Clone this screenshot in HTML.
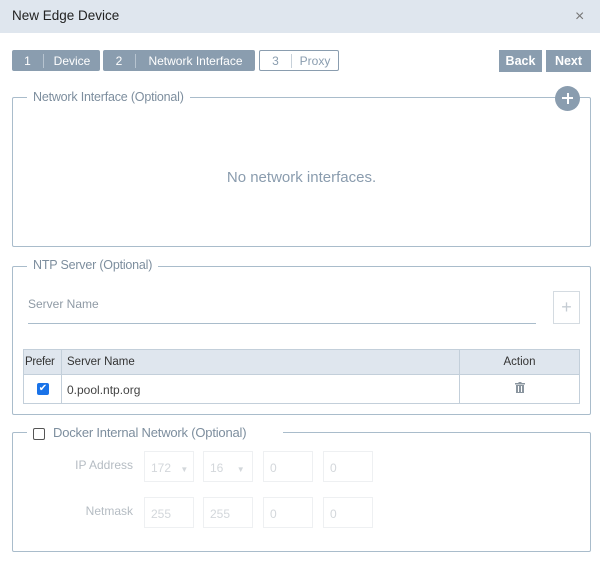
<!DOCTYPE html>
<html><head><meta charset="utf-8"><style>
*{box-sizing:border-box;margin:0;padding:0}
body{width:600px;height:563px;background:#fff;font-family:"Liberation Sans",sans-serif;position:relative;overflow:hidden;color:#333}
.a{position:absolute}
.hdr{left:0;top:0;width:600px;height:33px;background:#dfe6ee}
.step{height:21px;top:50px;background:#8a9daf;color:#fff;font-size:12px;border-radius:2px;display:flex;align-items:center}
.step span{display:block;text-align:center}
.fs{border:1px solid #a9bccb;border-radius:2px}
.lg{background:#fff;color:#7d8e9e;font-size:12.5px;padding:0 6px;letter-spacing:-0.2px}
.box{border:1px solid #eef0f2;height:31px;width:50px;font-size:12px;color:#d3d7db;padding:9px 0 0 6px}
.lbl{font-size:12px;color:#b5bcc3;text-align:right;width:90px}
</style></head><body>
<div class="a hdr"></div>
<div class="a" style="left:12px;top:8px;font-size:13.5px;color:#222">New Edge Device</div>
<div class="a" style="left:575px;top:8px;font-size:16px;color:#777">×</div>

<div class="a step" style="left:12px;width:88px"><span style="width:32px;border-right:1px solid #b7c4d0">1</span><span style="flex:1">Device</span></div>
<div class="a step" style="left:103px;width:152px"><span style="width:33px;border-right:1px solid #b7c4d0">2</span><span style="flex:1">Network Interface</span></div>
<div class="a step" style="left:259px;width:80px;background:#fff;border:1px solid #8a9daf;color:#8a9daf"><span style="width:32px;border-right:1px solid #c7d1da">3</span><span style="flex:1">Proxy</span></div>
<div class="a step" style="left:499px;width:43px;top:50px;height:22px;justify-content:center;font-weight:bold;font-size:12.5px;border-radius:0">Back</div>
<div class="a step" style="left:546px;width:45px;top:50px;height:22px;justify-content:center;font-weight:bold;font-size:12.5px;border-radius:0">Next</div>

<div class="a fs" style="left:12px;top:97px;width:579px;height:150px"></div>
<div class="a lg" style="left:27px;top:90px">Network Interface (Optional)</div>
<div class="a" style="left:555px;top:86px;width:25px;height:25px;border-radius:50%;background:#8a9daf"></div>
<div class="a" style="left:562px;top:97px;width:11px;height:2px;background:#fff"></div>
<div class="a" style="left:566.5px;top:92.5px;width:2px;height:11px;background:#fff"></div>
<div class="a" style="left:12px;top:169px;width:579px;text-align:center;font-size:15px;color:#8a9cae">No network interfaces.</div>

<div class="a fs" style="left:12px;top:266px;width:579px;height:149px"></div>
<div class="a lg" style="left:27px;top:258px">NTP Server (Optional)</div>
<div class="a" style="left:28px;top:297px;font-size:12px;color:#8f9aa5">Server Name</div>
<div class="a" style="left:28px;top:323px;width:508px;height:1px;background:#a9bccb"></div>
<div class="a" style="left:553px;top:291px;width:27px;height:33px;border:1px solid #d4dbe1;color:#c5ccd3;font-size:18px;text-align:center;line-height:30px">+</div>

<div class="a" style="left:23px;top:349px;width:557px;height:55px;border:1px solid #c3cfda"></div>
<div class="a" style="left:24px;top:350px;width:555px;height:25px;background:#dfe6ee;border-bottom:1px solid #c3cfda"></div>
<div class="a" style="left:61px;top:350px;width:1px;height:53px;background:#c3cfda"></div>
<div class="a" style="left:459px;top:350px;width:1px;height:53px;background:#c3cfda"></div>
<div class="a" style="left:25px;top:356px;font-size:11.5px;color:#333;letter-spacing:-0.3px">Prefer</div>
<div class="a" style="left:67px;top:356px;font-size:11.5px;color:#333">Server Name</div>
<div class="a" style="left:460px;top:356px;width:119px;text-align:center;font-size:11.5px;color:#333">Action</div>
<div class="a" style="left:37px;top:383px;width:12px;height:12px;background:#1a73e8;border-radius:2px;color:#fff;font-size:10px;line-height:12px;text-align:center">✔</div>
<div class="a" style="left:67px;top:383px;font-size:12px;color:#444">0.pool.ntp.org</div>
<svg class="a" style="left:515px;top:382px" width="10" height="11" viewBox="0 0 10 11"><rect x="0" y="1" width="10" height="1.5" fill="#8a959f"/><rect x="3.5" y="0" width="3" height="1.5" fill="#8a959f"/><rect x="1" y="3" width="8" height="8" fill="#8a959f"/><rect x="3" y="4" width="1" height="6" fill="#fff"/><rect x="6" y="4" width="1" height="6" fill="#fff"/></svg>

<div class="a fs" style="left:12px;top:432px;width:579px;height:120px"></div>
<div class="a" style="left:27px;top:426px;width:256px;height:14px;background:#fff"></div>
<div class="a" style="left:33px;top:428px;width:12px;height:12px;border:1px solid #555;border-radius:2px"></div>
<div class="a lg" style="left:47px;top:425px;font-size:13px">Docker Internal Network (Optional)</div>

<div class="a lbl" style="left:43px;top:458px">IP Address</div>
<div class="a box" style="left:144px;top:451px">172 <span style="font-size:8px;margin-left:6px">▼</span></div>
<div class="a box" style="left:203px;top:451px">16 <span style="font-size:8px;margin-left:10px">▼</span></div>
<div class="a box" style="left:263px;top:451px">0</div>
<div class="a box" style="left:323px;top:451px">0</div>
<div class="a lbl" style="left:43px;top:504px">Netmask</div>
<div class="a box" style="left:144px;top:497px">255</div>
<div class="a box" style="left:203px;top:497px">255</div>
<div class="a box" style="left:263px;top:497px">0</div>
<div class="a box" style="left:323px;top:497px">0</div>
</body></html>
